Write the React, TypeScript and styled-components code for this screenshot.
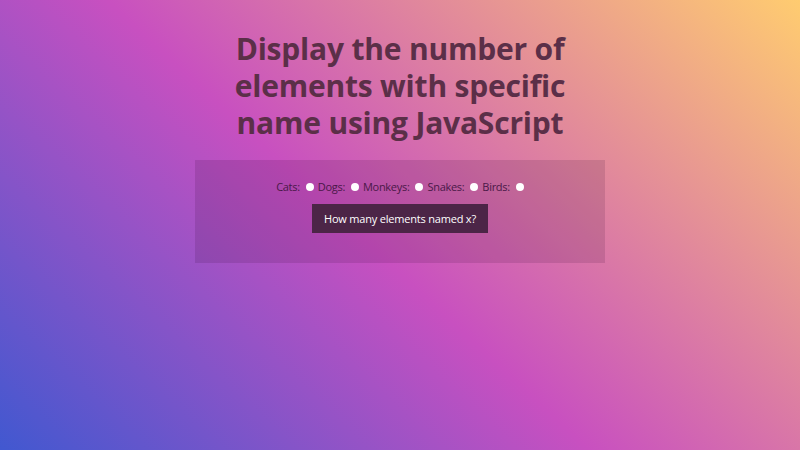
import styled, { createGlobalStyle } from 'styled-components'

const GlobalStyle = createGlobalStyle`
  html, body {
    margin: 0;
    padding: 0;
  }

  body {
    width: 100vw;
    height: 100vh;
    overflow: hidden;
    font-family: 'Open Sans', 'Liberation Sans', sans-serif;
    background-color: #4158d0;
    background-image: linear-gradient(43deg, #4158d0 0%, #c850c0 46%, #ffcc70 100%);
  }
`

const animals = ['Cats', 'Dogs', 'Monkeys', 'Snakes', 'Birds']

const App = () => {
  return (
    <Page>
      <GlobalStyle />
      <Title>Display the number of elements with specific name using JavaScript</Title>
      <Panel>
        <RadioRow>
          {animals.map((name) => (
            <Choice key={name}>
              {name}:
              <Radio type="radio" name="animal" />
            </Choice>
          ))}
        </RadioRow>
        <CountButton>How many elements named x?</CountButton>
      </Panel>
    </Page>
  )
}

const Page = styled.div`
  display: flex;
  flex-direction: column;
  align-items: center;
  padding-top: 30px;
`

const Title = styled.h1`
  width: 350px;
  margin: 0 0 19px;
  font-size: 30px;
  font-weight: 700;
  line-height: 37px;
  letter-spacing: -0.2px;
  text-align: center;
  color: #5b2f48;
`

const Panel = styled.div`
  display: flex;
  flex-direction: column;
  align-items: center;
  gap: 10px;
  width: 410px;
  height: 103px;
  box-sizing: border-box;
  padding-top: 19px;
  background: rgba(40, 0, 40, 0.13);
`

const RadioRow = styled.div`
  display: flex;
  align-items: center;
  gap: 4px;
  font-size: 11px;
  letter-spacing: -0.3px;
  color: #4a1848;
`

const Choice = styled.label`
  display: flex;
  align-items: center;
  gap: 6px;
`

const Radio = styled.input`
  appearance: none;
  width: 8px;
  height: 8px;
  margin: 0;
  border-radius: 50%;
  background: #fff;
`

const CountButton = styled.button`
  width: 176px;
  height: 29px;
  border: none;
  background: #4c2547;
  color: #fff;
  font-family: 'Open Sans', 'Liberation Sans', sans-serif;
  font-size: 11px;
  letter-spacing: -0.2px;
  cursor: pointer;
`

export default App
